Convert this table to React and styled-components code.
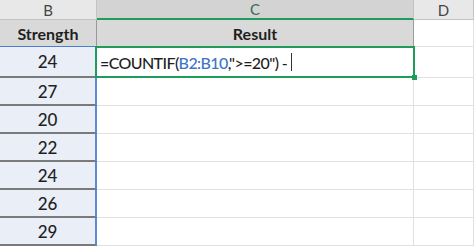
import React from "react";
import styled, { createGlobalStyle } from "styled-components";

const GlobalStyle = createGlobalStyle`
    body {
        margin: 0;
        background: #fff;
        font-family: Lato, "Open Sans", sans-serif;
    }
`

const Sheet = styled.div`
    display: grid;
    grid-template-columns: 97px 317px 60px;
    grid-template-rows: 20px 27px 31px repeat(6, 28px);
    width: 474px;
    height: 246px;
    overflow: hidden;
    color: #1f1f1f;
`

const ColHead = styled.div`
    box-sizing: border-box;
    display: flex;
    align-items: center;
    justify-content: center;
    font-size: 15px;
    background: ${p => p.active ? "#d3d3d3" : "#e8e8e8"};
    color: ${p => p.active ? "#3e6a54" : "#454545"};
    border-right: 1px solid #c4c4c4;
    border-bottom: ${p => p.active ? "2px solid #1f9c5a" : "1px solid #c4c4c4"};
`

const TitleCell = styled.div`
    box-sizing: border-box;
    display: flex;
    align-items: center;
    justify-content: center;
    font-size: 16px;
    font-weight: 700;
    background: ${p => p.blank ? "#fff" : "#d9d9d9"};
    border-right: 1px solid ${p => p.blank ? "#e2e2e2" : "#9a9a9a"};
    border-bottom: 1px solid ${p => p.blank ? "#e2e2e2" : p.under || "#bdbdbd"};
`

const NumCell = styled.div`
    box-sizing: border-box;
    display: flex;
    align-items: center;
    justify-content: center;
    font-size: 17px;
    font-weight: 500;
    background: #e9eef7;
    border-right: 2px solid #5b8ad6;
    border-bottom: 2px solid #7a7a7a;
`

const EmptyCell = styled.div`
    box-sizing: border-box;
    border-bottom: 1px solid #e0e0e0;
    border-right: 1px solid #e0e0e0;
    background: #fff;
`

const EditCell = styled.div`
    position: relative;
    box-sizing: border-box;
    display: flex;
    align-items: center;
    padding-left: 3px;
    margin: -1px -1px 0 -2px;
    font-size: 16px;
    font-weight: 500;
    letter-spacing: -0.6px;
    white-space: pre;
    background: #fff;
    border: 2.5px solid #1f9c5a;

    &::after {
        content: "";
        position: absolute;
        right: -4px;
        bottom: -4px;
        width: 5px;
        height: 5px;
        background: #1f9c5a;
    }
`

const Ref = styled.span`
    color: #3d74c8;
`

const Caret = styled.span`
    display: inline-block;
    width: 1px;
    height: 18px;
    background: #333;
`

const values = [27, 20, 22, 24, 26, 29]

const App = () => {
    return (
        <Sheet>
            <GlobalStyle />
            <ColHead>B</ColHead>
            <ColHead active>C</ColHead>
            <ColHead>D</ColHead>

            <TitleCell under="#4a7fd4">Strength</TitleCell>
            <TitleCell>Result</TitleCell>
            <TitleCell blank />

            <NumCell>24</NumCell>
            <EditCell>
                =COUNTIF(<Ref>B2:B10</Ref>,"&gt;=20") - <Caret />
            </EditCell>
            <EmptyCell />

            {values.map((v, i) => (
                <React.Fragment key={i}>
                    <NumCell>{v}</NumCell>
                    <EmptyCell />
                    <EmptyCell />
                </React.Fragment>
            ))}
        </Sheet>
    )
}

export default App
